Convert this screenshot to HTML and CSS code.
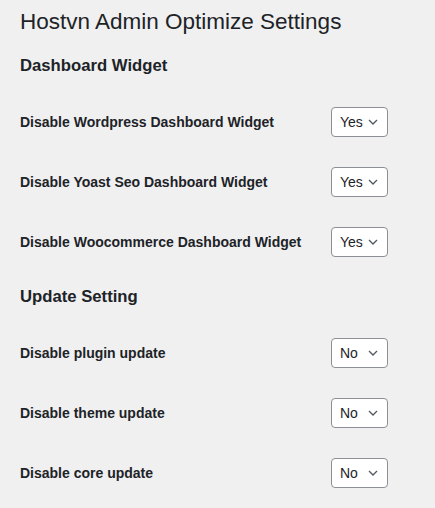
FILE: index.html
```html
<!DOCTYPE html>
<html lang="en">
<head>
    <meta charset="UTF-8">
    <meta name="viewport" content="width=device-width, initial-scale=1.0">
    <title>Hostvn Admin Optimize Settings</title>
    <link rel="stylesheet" href="styles.css">
</head>
<body>
    <div class="wrap">
        <h1>Hostvn Admin Optimize Settings</h1>

        <h2>Dashboard Widget</h2>
        <div class="form-table">
            <div class="row">
                <label>Disable Wordpress Dashboard Widget</label>
                <span class="select">Yes <svg viewBox="0 0 10 6"><path d="M1 1l4 4 4-4"/></svg></span>
            </div>
            <div class="row">
                <label>Disable Yoast Seo Dashboard Widget</label>
                <span class="select">Yes <svg viewBox="0 0 10 6"><path d="M1 1l4 4 4-4"/></svg></span>
            </div>
            <div class="row">
                <label>Disable Woocommerce Dashboard Widget</label>
                <span class="select">Yes <svg viewBox="0 0 10 6"><path d="M1 1l4 4 4-4"/></svg></span>
            </div>
        </div>

        <h2 class="next">Update Setting</h2>
        <div class="form-table">
            <div class="row">
                <label>Disable plugin update</label>
                <span class="select">No <svg viewBox="0 0 10 6"><path d="M1 1l4 4 4-4"/></svg></span>
            </div>
            <div class="row">
                <label>Disable theme update</label>
                <span class="select">No <svg viewBox="0 0 10 6"><path d="M1 1l4 4 4-4"/></svg></span>
            </div>
            <div class="row">
                <label>Disable core update</label>
                <span class="select">No <svg viewBox="0 0 10 6"><path d="M1 1l4 4 4-4"/></svg></span>
            </div>
        </div>
    </div>
</body>
</html>
```

FILE: styles.css
```css
body {
    margin: 0;
    background: #f0f0f1;
    color: #1d2327;
    font-family: "Liberation Sans", Arial, sans-serif;
    font-size: 13px;
}

.wrap {
    padding: 7px 20px 0 20px;
}

h1 {
    font-size: 22.5px;
    font-weight: 400;
    line-height: 30px;
    margin: 0 0 18px 0;
}

h2 {
    font-size: 16.7px;
    font-weight: 600;
    line-height: 22px;
    margin: 0 0 15px 0;
}

h2.next {
    margin-top: 14px;
}

.row {
    display: flex;
    align-items: center;
    height: 60px;
}

.row label {
    width: 311px;
    font-weight: 600;
    font-size: 14px;
}

.select {
    box-sizing: border-box;
    display: flex;
    align-items: center;
    width: 57px;
    height: 30px;
    padding: 0 9px 0 8px;
    background: #fff;
    border: 1px solid #8c8f94;
    border-radius: 4px;
    font-size: 14px;
}

.select svg {
    width: 10px;
    height: 6px;
    margin-left: auto;
    fill: none;
    stroke: #50575e;
    stroke-width: 1.3;
}
```
